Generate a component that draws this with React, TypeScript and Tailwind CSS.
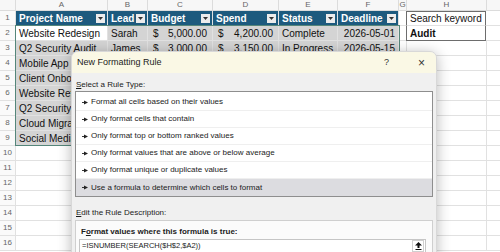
import React from "react";

const colW = [
  "w-[16px]",
  "w-[92px]",
  "w-[40px]",
  "w-[65px]",
  "w-[66px]",
  "w-[59px]",
  "w-[61px]",
  "w-[8px]",
  "w-[80px]",
  "w-[40px]",
];
const letters = ["", "A", "B", "C", "D", "E", "F", "G", "H", ""];

type TRow = {
  name: string;
  lead: string;
  budget: string;
  spend: string;
  status: string;
  deadline: string;
};

const rows: TRow[] = [
  { name: "Website Redesign", lead: "Sarah", budget: "5,000.00", spend: "4,200.00", status: "Complete", deadline: "2026-05-01" },
  { name: "Q2 Security Audit", lead: "James", budget: "3,000.00", spend: "3,150.00", status: "In Progress", deadline: "2026-05-15" },
  { name: "Mobile App Launch", lead: "Priya", budget: "8,500.00", spend: "6,100.00", status: "In Progress", deadline: "2026-06-10" },
  { name: "Client Onboarding", lead: "Tom", budget: "2,000.00", spend: "1,800.00", status: "Complete", deadline: "2026-04-20" },
  { name: "Website Refresh", lead: "Anna", budget: "4,000.00", spend: "2,300.00", status: "Planned", deadline: "2026-07-01" },
  { name: "Q2 Security Review", lead: "James", budget: "1,500.00", spend: "900.00", status: "Planned", deadline: "2026-06-30" },
  { name: "Cloud Migration", lead: "Leo", budget: "12,000.00", spend: "9,750.00", status: "In Progress", deadline: "2026-08-15" },
  { name: "Social Media Audit", lead: "Mia", budget: "1,200.00", spend: "1,250.00", status: "Complete", deadline: "2026-05-05" },
];

const FilterBtn: React.FC = () => (
  <span className="ml-auto mr-[2px] w-[9px] h-[9px] bg-[#ececec] flex items-center justify-center shrink-0">
    <svg width="5" height="3" viewBox="0 0 5 3">
      <polygon points="0,0 5,0 2.5,3" fill="#333" />
    </svg>
  </span>
);

const Money: React.FC<{ v: string }> = ({ v }) => (
  <span className="flex w-full justify-between px-[5px]">
    <span>$</span>
    <span>{v}</span>
  </span>
);

const Arrow: React.FC = () => (
  <svg width="6" height="5" viewBox="0 0 6 5" className="shrink-0">
    <line x1="0" y1="2.5" x2="2.5" y2="2.5" stroke="#222" strokeWidth="0.9" />
    <polygon points="2,0.6 6,2.5 2,4.4" fill="#222" />
  </svg>
);

const ruleTypes = [
  "Format all cells based on their values",
  "Only format cells that contain",
  "Only format top or bottom ranked values",
  "Only format values that are above or below average",
  "Only format unique or duplicate values",
  "Use a formula to determine which cells to format",
];

export default function App() {
  const cell = "h-[15px] shrink-0 border-r border-b border-[#e1e1e1] flex items-center overflow-hidden whitespace-nowrap";

  const renderRow = (r: number) => {
    const isHead = r === 1;
    const data = r >= 2 && r <= 9 ? rows[r - 2] : null;
    return (
      <div key={r} className="flex">
        <div className={`${colW[0]} ${cell} justify-center text-[8px] text-[#666] bg-[#fafafa]`}>{r}</div>
        {isHead ? (
          <>
            {["Project Name", "Lead", "Budget", "Spend", "Status", "Deadline"].map((h, i) => (
              <div
                key={h}
                className={`${colW[i + 1]} ${cell} bg-[#1d5a7e] border-[#2f6a8c] text-white font-bold pl-[3px]`}
              >
                <span>{h}</span>
                <FilterBtn />
              </div>
            ))}
          </>
        ) : data ? (
          <>
            <div className={`${colW[1]} ${cell} pl-[3px] border-[#bdbdbd] ${r === 2 ? "bg-white" : "bg-[#d4d4d4]"}`}>
              {data.name}
            </div>
            <div className={`${colW[2]} ${cell} pl-[3px] bg-[#d4d4d4] border-[#bdbdbd]`}>{data.lead}</div>
            <div className={`${colW[3]} ${cell} bg-[#d4d4d4] border-[#bdbdbd]`}>
              <Money v={data.budget} />
            </div>
            <div className={`${colW[4]} ${cell} bg-[#d4d4d4] border-[#bdbdbd]`}>
              <Money v={data.spend} />
            </div>
            <div className={`${colW[5]} ${cell} pl-[3px] bg-[#d4d4d4] border-[#bdbdbd]`}>{data.status}</div>
            <div className={`${colW[6]} ${cell} justify-end pr-[3px] bg-[#d4d4d4] border-[#bdbdbd]`}>{data.deadline}</div>
          </>
        ) : (
          <>
            {[1, 2, 3, 4, 5, 6].map((i) => (
              <div key={i} className={`${colW[i]} ${cell}`} />
            ))}
          </>
        )}
        <div className={`${colW[7]} ${cell}`} />
        {r === 1 ? (
          <div className={`${colW[8]} h-[15px] shrink-0 flex items-center overflow-hidden whitespace-nowrap pl-[3px] border-t border-l border-r border-b border-t-[#6d6d6d] border-l-[#6d6d6d] border-r-[#6d6d6d] border-b-[#e1e1e1] -ml-px`}>
            Search keyword
          </div>
        ) : r === 2 ? (
          <div className={`${colW[8]} h-[15px] shrink-0 flex items-center overflow-hidden whitespace-nowrap pl-[3px] font-bold border-l border-r border-b border-[#6d6d6d] -ml-px`}>
            Audit
          </div>
        ) : (
          <div className={`${colW[8]} ${cell}`} />
        )}
        <div className={`${colW[9]} ${cell}`} />
      </div>
    );
  };

  return (
    <div className="relative w-[500px] h-[252px] overflow-hidden bg-white font-['Liberation_Sans',Arial,sans-serif] text-[10px] text-[#111]">
      {/* column letters */}
      <div className="flex">
        {letters.map((l, i) => (
          <div
            key={i}
            className={`${colW[i]} h-[11px] shrink-0 border-r border-b border-[#dcdcdc] bg-[#f7f7f7] flex items-center justify-center text-[8px] text-[#666]`}
          >
            {l}
          </div>
        ))}
      </div>
      {Array.from({ length: 16 }, (_, i) => renderRow(i + 1))}

      {/* selection border A2:F9 */}
      <div className="absolute left-[15px] top-[25px] w-[385px] h-[121px] border-[1.5px] border-[#55867a] pointer-events-none" />

      {/* dialog */}
      <div className="absolute left-[71px] top-[51px] w-[366px] h-[215px] rounded-t-[7px] overflow-hidden bg-[#f0f0f0] shadow-[0_2px_14px_rgba(0,0,0,0.28)] border border-[#d8d8d8] text-[#1b1b1b]">
        <div className="h-[21px] bg-[#faf8e5] flex items-center pl-[5px] text-[9px]">
          <span>New Formatting Rule</span>
          <span className="ml-auto mr-[29px] text-[9px] text-[#333]">?</span>
          <span className="mr-[11px] text-[12px] leading-none text-[#333]">×</span>
        </div>
        <div className="px-[3px] pt-[7px] text-[8px]">
          <div className="h-[10px] leading-[10px] pl-[1px]">
            <span className="underline">S</span>elect a Rule Type:
          </div>
          <div className="mt-[1px] w-[358px] border border-[#8e8e8e] bg-white pt-[2px]">
            {ruleTypes.map((t, i) => (
              <div
                key={t}
                className={`h-[17px] flex items-center gap-[3px] pl-[6px] ${
                  i === 5 ? "bg-[#dcdce0]" : "border-b border-[#efefef]"
                }`}
              >
                <Arrow />
                <span>{t}</span>
              </div>
            ))}
          </div>
          <div className="mt-[11px] h-[10px] leading-[10px] pl-[1px]">
            <span className="underline">E</span>dit the Rule Description:
          </div>
          <div className="mt-[2px] w-[358px] h-[40px] border border-[#cfcfcf] bg-[#fbfbfb] pt-[6px] px-[3px]">
            <div className="font-bold pl-[2px] h-[10px] leading-[10px]">
              F<span className="underline">o</span>rmat values where this formula is true:
            </div>
            <div className="mt-[2px] w-[347px] h-[14px] border border-[#c6c6c6] bg-white flex items-center pl-[2px] text-[7.5px]">
              <span>=ISNUMBER(SEARCH($H$2,$A2))</span>
              <span className="ml-auto mr-[1px] w-[12px] h-[12px] border border-[#d0d0d0] bg-white flex items-center justify-center">
                <svg width="7" height="8" viewBox="0 0 7 8">
                  <polygon points="3.5,0 7,3.5 4.5,3.5 4.5,6 2.5,6 2.5,3.5 0,3.5" fill="#111" />
                  <rect x="0.5" y="7" width="6" height="1" fill="#111" />
                </svg>
              </span>
            </div>
          </div>
        </div>
      </div>
    </div>
  );
}
